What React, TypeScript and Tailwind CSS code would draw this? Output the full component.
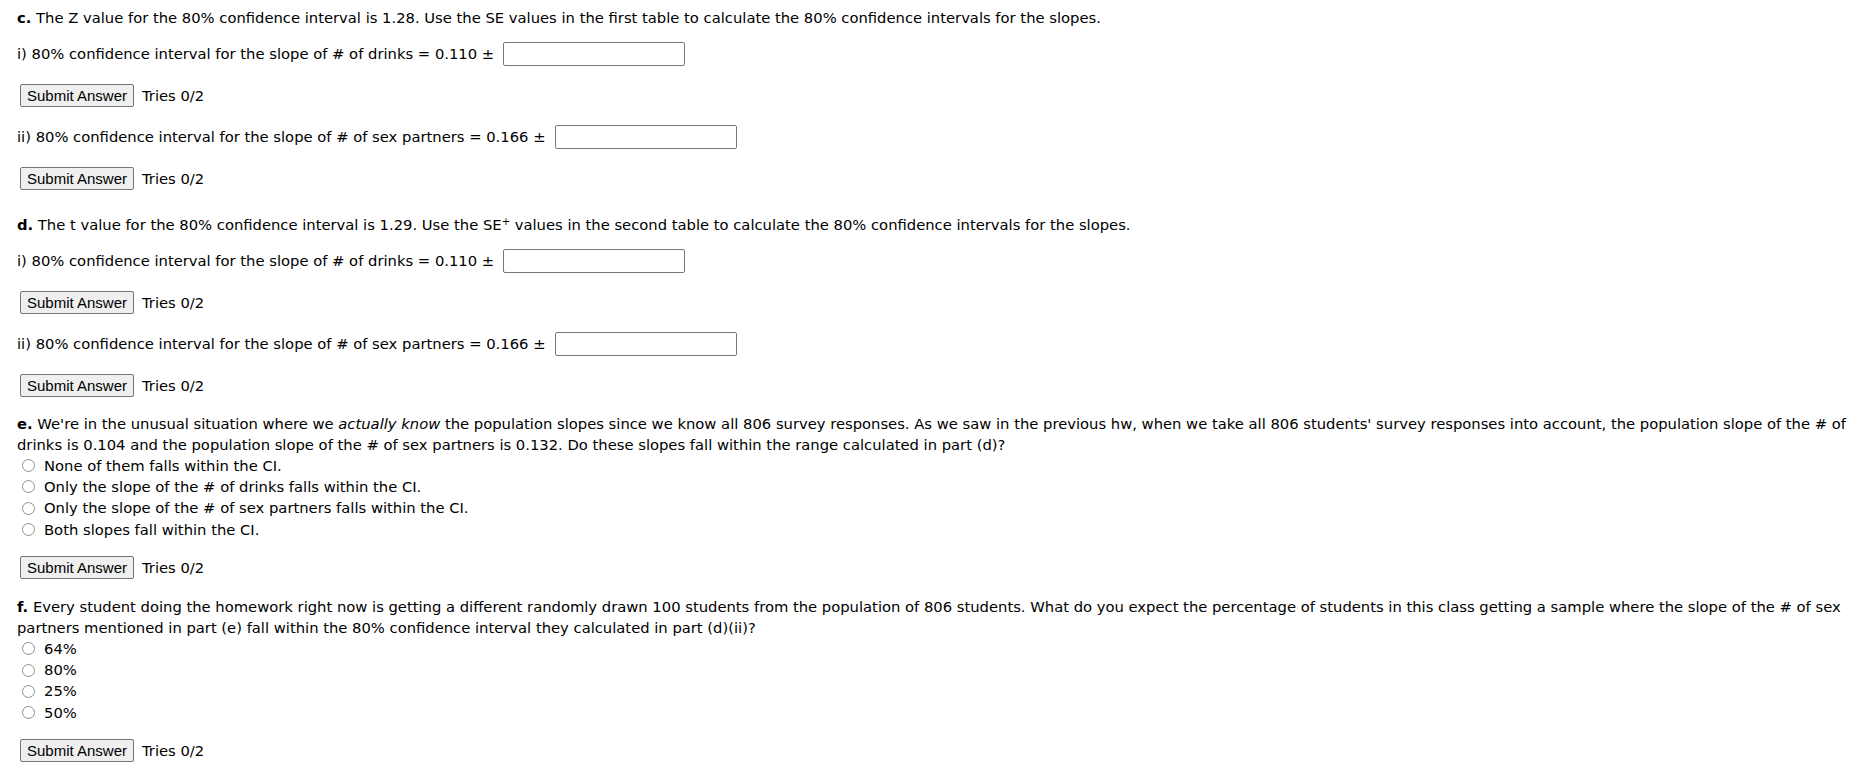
import React from "react";

function Btn() {
  return (
    <div className="flex items-center h-[23px]">
      <button className="ml-[3px] w-[114px] h-[23px] bg-[#efefef] border border-[#767676] rounded-[2px] text-[15px] text-black font-['Liberation_Sans',Arial,sans-serif] leading-none flex items-center justify-center">
        Submit Answer
      </button>
      <span className="ml-[8px]">Tries 0/2</span>
    </div>
  );
}

function InputRow({ label, value }: { label: string; value: string }) {
  return (
    <div className="flex items-center h-[24px]">
      <span>
        {label} = {value} ±
      </span>
      <input className="ml-[9px] w-[182px] h-[24px] border border-[#767676] rounded-[2px] bg-white" />
    </div>
  );
}

function Radio({ text }: { text: string }) {
  return (
    <div className="flex items-center h-[21.3px]">
      <span className="ml-[5px] w-[13px] h-[13px] rounded-full border border-[#8f8f8f] bg-white shrink-0" />
      <span className="ml-[9px]">{text}</span>
    </div>
  );
}

export default function App() {
  return (
    <div className="min-h-screen bg-white text-black pl-[17px] pr-[4px] pt-[8px] font-['DejaVu_Sans',Verdana,sans-serif] text-[14.75px] leading-[20px]">
      <div className="flex flex-col">
        <p>
          <b>c.</b> The Z value for the 80% confidence interval is 1.28. Use the SE values in the first table to calculate the 80% confidence intervals for the slopes.
        </p>
        <div className="mt-[14px]">
          <InputRow label="i) 80% confidence interval for the slope of # of drinks" value="0.110" />
        </div>
        <div className="mt-[18px]">
          <Btn />
        </div>
        <div className="mt-[18px]">
          <InputRow label="ii) 80% confidence interval for the slope of # of sex partners" value="0.166" />
        </div>
        <div className="mt-[18px]">
          <Btn />
        </div>
        <p className="mt-[25px]">
          <b>d.</b> The t value for the 80% confidence interval is 1.29. Use the SE<sup className="text-[10px]">+</sup> values in the second table to calculate the 80% confidence intervals for the slopes.
        </p>
        <div className="mt-[14px]">
          <InputRow label="i) 80% confidence interval for the slope of # of drinks" value="0.110" />
        </div>
        <div className="mt-[18px]">
          <Btn />
        </div>
        <div className="mt-[18px]">
          <InputRow label="ii) 80% confidence interval for the slope of # of sex partners" value="0.166" />
        </div>
        <div className="mt-[18px]">
          <Btn />
        </div>
        <div className="mt-[17px]">
          <p className="leading-[20.5px]">
            <b>e.</b> We're in the unusual situation where we <i>actually know</i> the population slopes since we know all 806 survey responses. As we saw in the previous hw, when we take all 806 students' survey responses into account, the population slope of the # of drinks is 0.104 and the population slope of the # of sex partners is 0.132. Do these slopes fall within the range calculated in part (d)?
          </p>
          <Radio text="None of them falls within the CI." />
          <Radio text="Only the slope of the # of drinks falls within the CI." />
          <Radio text="Only the slope of the # of sex partners falls within the CI." />
          <Radio text="Both slopes fall within the CI." />
        </div>
        <div className="mt-[16px]">
          <Btn />
        </div>
        <div className="mt-[18px]">
          <p className="leading-[20.5px]">
            <b>f.</b> Every student doing the homework right now is getting a different randomly drawn 100 students from the population of 806 students. What do you expect the percentage of students in this class getting a sample where the slope of the # of sex partners mentioned in part (e) fall within the 80% confidence interval they calculated in part (d)(ii)?
          </p>
          <Radio text="64%" />
          <Radio text="80%" />
          <Radio text="25%" />
          <Radio text="50%" />
        </div>
        <div className="mt-[16px]">
          <Btn />
        </div>
      </div>
    </div>
  );
}
